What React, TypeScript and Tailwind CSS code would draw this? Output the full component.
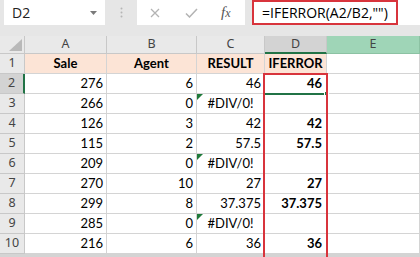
import React from "react";

const cols = ["A", "B", "C", "D", "E"];

const rows: { a: string; b: string; c: string; d: string; err?: boolean }[] = [
  { a: "276", b: "6", c: "46", d: "46" },
  { a: "266", b: "0", c: "#DIV/0!", d: "", err: true },
  { a: "126", b: "3", c: "42", d: "42" },
  { a: "115", b: "2", c: "57.5", d: "57.5" },
  { a: "209", b: "0", c: "#DIV/0!", d: "", err: true },
  { a: "270", b: "10", c: "27", d: "27" },
  { a: "299", b: "8", c: "37.375", d: "37.375" },
  { a: "285", b: "0", c: "#DIV/0!", d: "", err: true },
  { a: "216", b: "6", c: "36", d: "36" },
];

const cell = "h-[20px] border-r border-b border-[#d4d4d4] flex items-center text-[13px] text-black";

export default function App() {
  return (
    <div className="w-[420px] h-[257px] overflow-hidden bg-white font-['Lato','Noto_Sans',sans-serif]">
      {/* Formula bar */}
      <div className="h-[36px] bg-[#e6e6e6] flex items-start">
        <div className="ml-[4px] w-[101px] h-[25px] bg-white flex items-center justify-between pl-[8px] pr-[8px]">
          <span className="text-[14px] text-[#222] font-['Open_Sans',sans-serif]">D2</span>
          <svg width="7" height="4" viewBox="0 0 7 4">
            <path d="M0 0 L7 0 L3.5 4 Z" fill="#7a7a7a" />
          </svg>
        </div>
        <div className="w-[32px] h-[25px] flex items-center justify-center">
          <svg width="3" height="11" viewBox="0 0 3 11">
            <circle cx="1.5" cy="1.5" r="1" fill="#b5b5b5" />
            <circle cx="1.5" cy="5.5" r="1" fill="#b5b5b5" />
            <circle cx="1.5" cy="9.5" r="1" fill="#b5b5b5" />
          </svg>
        </div>
        <div className="w-[108px] h-[25px] bg-white flex items-center pl-[13px] gap-[25px]">
          <svg width="10" height="10" viewBox="0 0 10 10">
            <path d="M1 1 L9 9 M9 1 L1 9" stroke="#b3b3b3" strokeWidth="1.3" />
          </svg>
          <svg width="13" height="10" viewBox="0 0 13 10">
            <path d="M1 5.5 L4.5 9 L12 1" stroke="#b3b3b3" strokeWidth="1.5" fill="none" />
          </svg>
          <span className="font-['Liberation_Serif',serif] italic text-[15px] text-[#555] leading-none -ml-[2px]">
            f<span className="text-[12px]">x</span>
          </span>
        </div>
        <div className="ml-[7px] w-[146px] h-[25px] bg-white border-2 border-[#d8343c] flex items-center pl-[8px]">
          <span className="text-[14px] text-black font-['Open_Sans',sans-serif]">=IFERROR(A2/B2,"")</span>
        </div>
        <div className="flex-1 h-[25px] bg-white" />
      </div>

      {/* Grid */}
      <div className="relative">
        <div className="grid grid-cols-[25px_82px_90px_68px_62px_93px]">
          {/* column headers */}
          <div className="h-[18px] bg-[#e9e9e9] border-r border-b border-[#c8c8c8] flex items-end justify-end pr-[2px] pb-[2px]">
            <svg width="13" height="12" viewBox="0 0 13 12">
              <path d="M13 0 L13 12 L0 12 Z" fill="#b9b9b9" />
            </svg>
          </div>
          {cols.map((c) => (
            <div
              key={c}
              className={`h-[18px] flex items-center justify-center text-[12.5px] font-['Noto_Sans',sans-serif] text-[#444] border-r ${
                c === "D"
                  ? "bg-[#d3d3d3] border-b-2 border-b-[#217346] border-r-[#c8c8c8]"
                  : c === "E"
                  ? "bg-[#9fd5b7] border-b border-[#8cc2a3]"
                  : "bg-[#e9e9e9] border-b border-[#c8c8c8]"
              }`}
            >
              {c}
            </div>
          ))}

          {/* row 1 */}
          <div className="h-[20px] bg-[#e9e9e9] border-r border-b border-[#c8c8c8] flex items-center justify-center text-[12.5px] font-['Noto_Sans',sans-serif] text-[#444]">
            1
          </div>
          {["Sale", "Agent", "RESULT", "IFERROR"].map((h) => (
            <div key={h} className={`${cell} justify-center font-bold bg-[#fce4d6]`}>
              {h}
            </div>
          ))}
          <div className={cell} />

          {rows.map((r, i) => (
            <React.Fragment key={i}>
              <div
                className={`h-[20px] border-b border-[#c8c8c8] flex items-center justify-center text-[12.5px] font-['Noto_Sans',sans-serif] text-[#444] ${
                  i === 0 ? "bg-[#d3d3d3] border-r-2 border-r-[#217346]" : "bg-[#e9e9e9] border-r"
                }`}
              >
                {i + 2}
              </div>
              <div className={`${cell} justify-end pr-[3px]`}>{r.a}</div>
              <div className={`${cell} justify-end pr-[3px]`}>{r.b}</div>
              <div className={`${cell} relative ${r.err ? "justify-center" : "justify-end pr-[3px]"}`}>
                {r.err && (
                  <svg className="absolute left-0 top-0" width="6" height="6" viewBox="0 0 6 6">
                    <path d="M0 0 L6 0 L0 6 Z" fill="#1f7a3a" />
                  </svg>
                )}
                {r.c}
              </div>
              <div className={`${cell} justify-end pr-[4px] font-bold`}>{r.d}</div>
              <div className={cell} />
            </React.Fragment>
          ))}
        </div>

        {/* D2 selection bottom edge + fill handle */}
        <div className="absolute left-[264px] top-[57px] w-[63px] h-[2px] bg-[#217346]" />
        <div className="absolute left-[324px] top-[55px] w-[5px] h-[5px] bg-[#217346] border border-white" />

        {/* red annotation box around D2:D10 */}
        <div className="absolute left-[263px] top-[37px] w-[65px] h-[190px] border-2 border-[#d8343c]" />

        <div className="h-[3px] bg-[#d4d4d4]" />
      </div>
    </div>
  );
}
